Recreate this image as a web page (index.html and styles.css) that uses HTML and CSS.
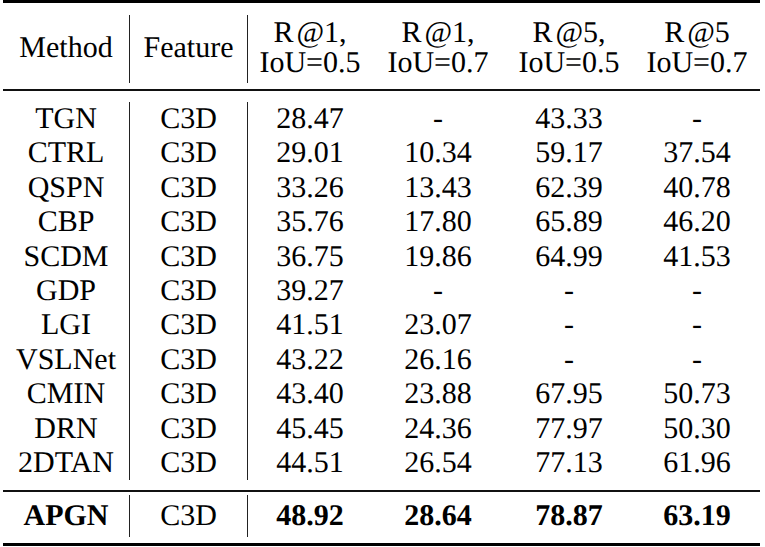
FILE: index.html
```html
<!DOCTYPE html>
<html lang="en">
<head>
    <meta charset="UTF-8">
    <meta name="viewport" content="width=device-width, initial-scale=1.0">
    <title>Results</title>
    <link rel="stylesheet" href="styles.css">
</head>
<body>
    <div class="results">
        <div class="grid head">
            <div class="cell mid">Method</div>
            <div class="cell mid">Feature</div>
            <div class="cell"><span class="r">R</span>@1,<br>IoU=0.5</div>
            <div class="cell"><span class="r">R</span>@1,<br>IoU=0.7</div>
            <div class="cell"><span class="r">R</span>@5,<br>IoU=0.5</div>
            <div class="cell"><span class="r">R</span>@5<br>IoU=0.7</div>
        </div>

        <div class="grid body">
            <div class="cell">TGN</div><div class="cell">C3D</div><div class="cell">28.47</div><div class="cell">-</div><div class="cell">43.33</div><div class="cell">-</div>
            <div class="cell">CTRL</div><div class="cell">C3D</div><div class="cell">29.01</div><div class="cell">10.34</div><div class="cell">59.17</div><div class="cell">37.54</div>
            <div class="cell">QSPN</div><div class="cell">C3D</div><div class="cell">33.26</div><div class="cell">13.43</div><div class="cell">62.39</div><div class="cell">40.78</div>
            <div class="cell">CBP</div><div class="cell">C3D</div><div class="cell">35.76</div><div class="cell">17.80</div><div class="cell">65.89</div><div class="cell">46.20</div>
            <div class="cell">SCDM</div><div class="cell">C3D</div><div class="cell">36.75</div><div class="cell">19.86</div><div class="cell">64.99</div><div class="cell">41.53</div>
            <div class="cell">GDP</div><div class="cell">C3D</div><div class="cell">39.27</div><div class="cell">-</div><div class="cell">-</div><div class="cell">-</div>
            <div class="cell">LGI</div><div class="cell">C3D</div><div class="cell">41.51</div><div class="cell">23.07</div><div class="cell">-</div><div class="cell">-</div>
            <div class="cell">VSLNet</div><div class="cell">C3D</div><div class="cell">43.22</div><div class="cell">26.16</div><div class="cell">-</div><div class="cell">-</div>
            <div class="cell">CMIN</div><div class="cell">C3D</div><div class="cell">43.40</div><div class="cell">23.88</div><div class="cell">67.95</div><div class="cell">50.73</div>
            <div class="cell">DRN</div><div class="cell">C3D</div><div class="cell">45.45</div><div class="cell">24.36</div><div class="cell">77.97</div><div class="cell">50.30</div>
            <div class="cell">2DTAN</div><div class="cell">C3D</div><div class="cell">44.51</div><div class="cell">26.54</div><div class="cell">77.13</div><div class="cell">61.96</div>
        </div>

        <div class="grid foot">
            <div class="cell best">APGN</div><div class="cell">C3D</div><div class="cell best">48.92</div><div class="cell best">28.64</div><div class="cell best">78.87</div><div class="cell best">63.19</div>
        </div>
    </div>
</body>
</html>
```

FILE: styles.css
```css
body {
    margin: 0;
    background-color: #fff;
}
.results {
    width: 757px;
    margin-left: 3px;
    border-top: 3px solid #000;
    border-bottom: 3px solid #000;
    font-family: "Liberation Serif", serif;
    font-size: 30px;
    color: #000;
    text-rendering: geometricPrecision;
}
.grid {
    display: grid;
    grid-template-columns: 127px 118px 124px 132px 130px 126px;
}
.cell {
    text-align: center;
}
.grid .cell:nth-child(6n+1),
.grid .cell:nth-child(6n+2) {
    border-right: 1.5px solid #222;
}
.head {
    padding: 12px 0 6px;
    border-bottom: 2px solid #111;
}
.head .cell {
    line-height: 30px;
    padding: 3px 0 5px;
}
.head .mid {
    display: flex;
    align-items: center;
    justify-content: center;
}
.head .r {
    margin-right: 3px;
}
.body {
    padding: 11px 0 10px;
    border-bottom: 2px solid #111;
}
.body .cell {
    line-height: 34.4px;
}
.foot {
    padding: 3px 0 6px;
}
.foot .cell {
    line-height: 42px;
}
.best {
    font-weight: bold;
}
```
